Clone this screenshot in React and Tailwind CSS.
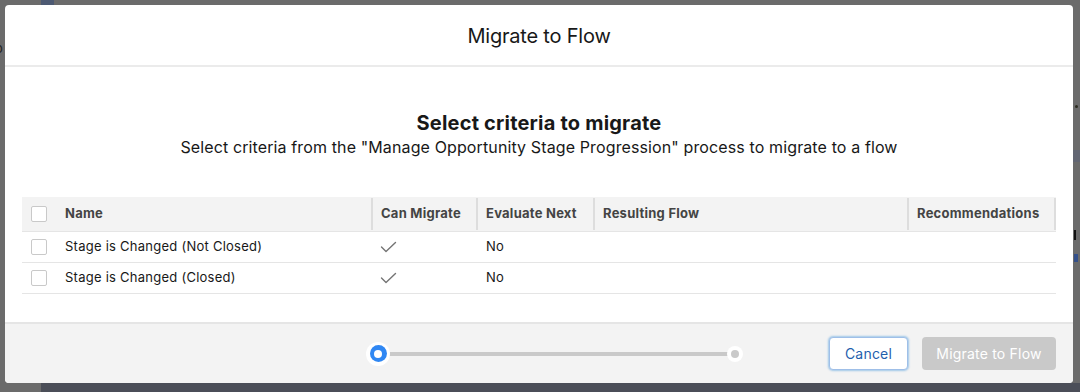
import React from "react";

const columns = [
  { key: "can", label: "Can Migrate", width: "w-[105px]" },
  { key: "eval", label: "Evaluate Next", width: "w-[117px]" },
  { key: "flow", label: "Resulting Flow", width: "w-[314px]" },
  { key: "rec", label: "Recommendations", width: "flex-1" },
];

const rows = [
  { name: "Stage is Changed (Not Closed)", canMigrate: true, evaluateNext: "No" },
  { name: "Stage is Changed (Closed)", canMigrate: true, evaluateNext: "No" },
];

function Checkbox() {
  return <span className="block w-4 h-4 rounded-[2px] border border-[#c9c9c9] bg-white" />;
}

function CheckMark() {
  return (
    <svg width="17" height="12" viewBox="0 0 17 12" fill="none">
      <path d="M1.5 6 L6 10.5 L15.5 1.5" stroke="#747474" strokeWidth="1.4" strokeLinecap="round" strokeLinejoin="round" />
    </svg>
  );
}

function Progress() {
  return (
    <div className="relative flex items-center w-[381px] h-6">
      {/* track */}
      <div className="absolute left-[20px] right-[10px] h-[4px] bg-[#c9c9c9] rounded-full" />
      {/* first step (active) */}
      <div className="relative w-6 h-6 rounded-full bg-white flex items-center justify-center">
        <div className="w-[17px] h-[17px] rounded-full bg-[#2f87f3] flex items-center justify-center">
          <div className="w-[8px] h-[8px] rounded-full bg-white" />
        </div>
      </div>
      {/* last step */}
      <div className="relative ml-auto mr-[4px] w-4 h-4 rounded-full bg-white flex items-center justify-center">
        <div className="w-2 h-2 rounded-full bg-[#c9c9c9]" />
      </div>
    </div>
  );
}

export default function App() {
  return (
    <div
      className="w-[1080px] h-[392px] bg-[#6b6b6b] flex flex-col overflow-hidden"
      style={{ fontFamily: "Inter, 'Noto Sans', Arial, sans-serif" }}
    >
      {/* top strip */}
      <div className="h-[5px] flex">
        <div className="ml-[41px] w-[13px] h-full bg-[#4d5a73]" />
      </div>

      <div className="flex h-[378px]">
        {/* left gutter */}
        <div className="w-[5px] relative">
          <span className="absolute top-[34px] -left-[5px] text-[13px] text-[#222]">o</span>
        </div>

        {/* modal */}
        <div className="w-[1068px] bg-white rounded-[4px] flex flex-col overflow-hidden">
          <header className="h-[62px] border-b-2 border-[#ebebeb] flex items-center justify-center pt-[3px]">
            <h1 className="text-[20px] leading-[25px] text-[#181818] tracking-[-0.2px]">Migrate to Flow</h1>
          </header>

          <main className="flex-1 px-[17px] pt-[44px]">
            <div className="text-center text-[#181818]">
              <h2 className="text-[20px] leading-[25px] font-bold tracking-[0.2px]">Select criteria to migrate</h2>
              <p className="text-[16px] leading-[22px] tracking-[0.12px]">
                Select criteria from the "Manage Opportunity Stage Progression" process to migrate to a flow
              </p>
            </div>

            <div className="mt-[39px] w-[1034px] text-[13px] tracking-[0.25px]">
              {/* header row */}
              <div className="flex h-[35px] bg-[#f3f3f3] border-b border-[#e5e5e5] font-bold text-[#444444]">
                <div className="w-[349px] flex items-center pl-[9px]">
                  <Checkbox />
                  <span className="ml-[18px]">Name</span>
                </div>
                {columns.map((c) => (
                  <div key={c.key} className={`${c.width} flex items-center my-[1px] pl-[8px] border-l-2 border-[#dddddd]`}>
                    {c.label}
                  </div>
                ))}
                <div className="w-0 border-l-2 border-[#dddddd] my-[1px]" />
              </div>

              {rows.map((r) => (
                <div key={r.name} className="flex h-[31px] border-b border-[#e5e5e5] text-[#181818]">
                  <div className="w-[349px] flex items-center pl-[9px]">
                    <Checkbox />
                    <span className="ml-[18px]">{r.name}</span>
                  </div>
                  <div className="w-[105px] flex items-center pl-[9px]">
                    {r.canMigrate && <CheckMark />}
                  </div>
                  <div className="w-[117px] flex items-center pl-[10px]">{r.evaluateNext}</div>
                  <div className="w-[314px]" />
                  <div className="flex-1" />
                </div>
              ))}
            </div>
          </main>

          <footer className="h-[61px] bg-[#f3f3f3] border-t-2 border-[#e5e5e5] flex items-center pl-[361px] pr-[17px]">
            <Progress />
            <div className="ml-auto flex items-center gap-[14px] text-[14px] tracking-[0.2px]">
              <button className="h-[33px] w-[79px] rounded-[4px] bg-white border border-[#9fbfe8] shadow-[0_0_2px_1px_rgba(1,118,211,0.35)] text-[#1f5fad]">
                Cancel
              </button>
              <button className="h-[33px] w-[134px] rounded-[4px] bg-[#c9c9c9] text-white">
                Migrate to Flow
              </button>
            </div>
          </footer>
        </div>

        {/* right gutter */}
        <div className="w-[7px] flex flex-col">
          <div className="mt-[100px] ml-[2px] w-[3px] h-[3px] rounded-full bg-[#2b2b20]" />
          <div className="mt-[42px] h-[12px] bg-[#626673]" />
          <div className="mt-[68px] ml-[1px] w-[2px] h-[10px] bg-[#111]" />
          <div className="mt-[14px] ml-[1px] w-[4px] h-[8px] bg-[#34508a]" />
        </div>
      </div>

      {/* bottom strip */}
      <div className="flex-1 flex">
        <div className="w-[41px]" />
        <div className="flex-1 bg-[#4b4e58]" />
      </div>
    </div>
  );
}
